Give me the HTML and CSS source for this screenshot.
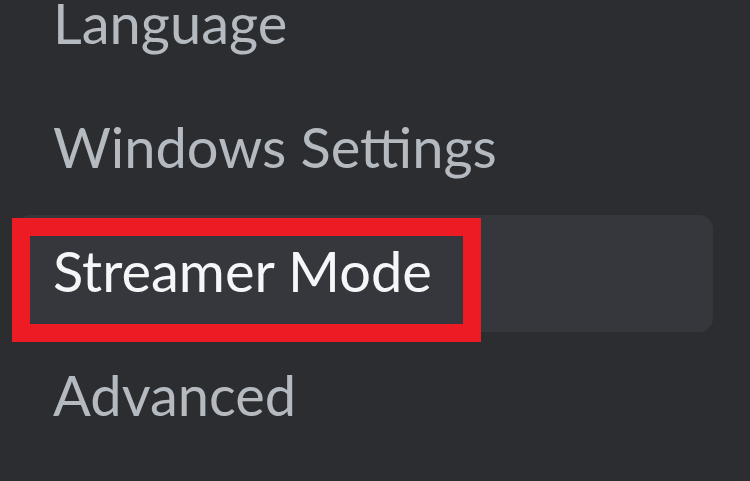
FILE: index.html
```html
<!DOCTYPE html>
<html lang="en">
<head>
    <title>Settings</title>
    <link rel="stylesheet" href="styles.css">
</head>
<body>
    <div id="sidebar">
        <div class="item">Language</div>
        <div class="item">Windows Settings</div>
        <div class="item selected">
            Streamer Mode
            <div class="highlight"></div>
        </div>
        <div class="item">Advanced</div>
    </div>
</body>
</html>
```

FILE: styles.css
```css
body {
    margin: 0;
    background-color: #2b2d31;
    height: 481px;
    overflow: hidden;
}
#sidebar {
    display: flex;
    flex-direction: column;
    gap: 7px;
    width: 696px;
    margin: -33px 0 0 17px;
}
.item {
    position: relative;
    height: 117px;
    box-sizing: border-box;
    padding: 0 36px 6px;
    border-radius: 14px;
    display: flex;
    align-items: center;
    font-family: Lato, "Liberation Sans", sans-serif;
    font-size: 56px;
    color: #b5bac1;
}
.selected {
    background-color: #36373c;
    color: #f5f6f8;
}
.highlight {
    position: absolute;
    left: -5px;
    top: 3px;
    width: 433px;
    height: 88px;
    border: 18px solid #ed1c24;
}
```
